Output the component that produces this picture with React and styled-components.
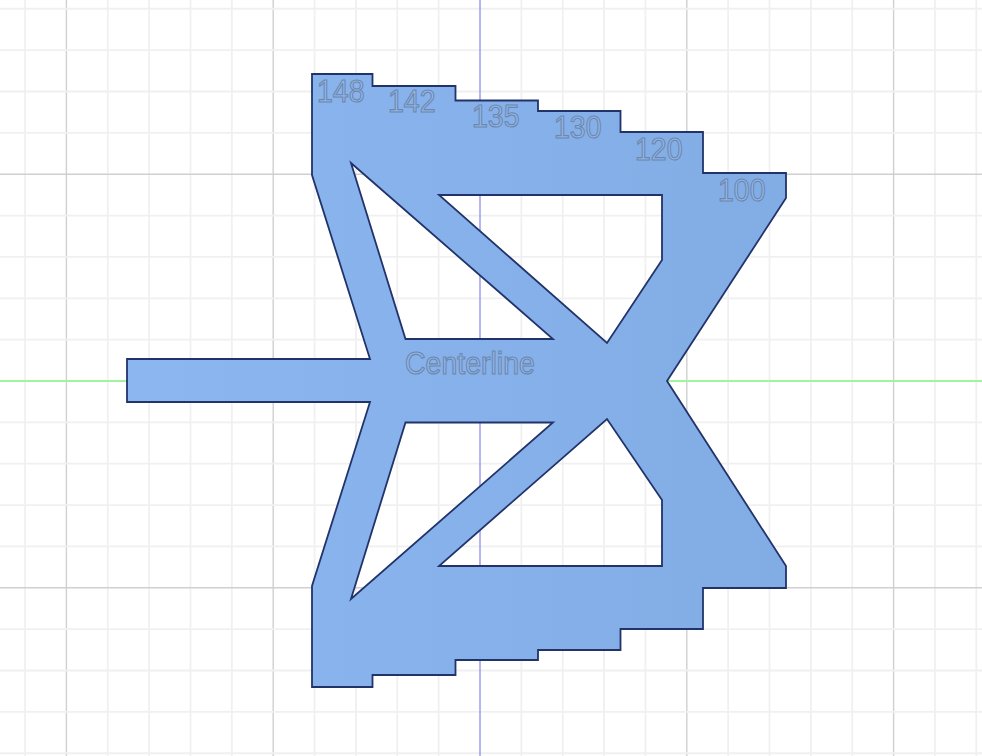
import React from "react";
import styled, { createGlobalStyle } from "styled-components";

const GlobalStyle = createGlobalStyle`
    html, body {
        margin: 0;
        padding: 0;
        background: #ffffff;
    }
`;

const WIDTH = 982;
const HEIGHT = 756;
const STEP = 41.36;

// one grid line each way through the origin of the sketch
const ORIGIN_X = 480;
const ORIGIN_Y = 381;

const gridValues = (origin, size) => {
    const values = [];
    const first = -Math.floor(origin / STEP);
    const last = Math.floor((size - origin) / STEP);
    for (let i = first; i <= last; i++) {
        if (i !== 0) values.push({ at: origin + i * STEP, major: i % 5 === 0 });
    }
    return values;
};

const OUTLINE = `
    M312 74 H372.5 V86 H455.5 V100.5 H538 V111 H620.5 V132 H703 V173 H786 V198
    L667 381 L786 566 V588 H703 V629 H620.5 V650 H538 V660 H455.5 V675 H372.5 V687 H312
    V586 L370 402 H127 V359 H370 L312 175 Z
    M351 163 L553 339 H405.5 Z
    M439 195 H662 V260 L607 343 Z
    M351 599 L405.5 422.5 H553 Z
    M439 566 H662 V500 L607 419 Z
`;

const LABELS = [
    { text: "148", x: 317, y: 102 },
    { text: "142", x: 388, y: 112 },
    { text: "135", x: 472, y: 127 },
    { text: "130", x: 554, y: 138 },
    { text: "120", x: 635, y: 160 },
    { text: "100", x: 718, y: 201 },
    { text: "Centerline", x: 405, y: 374 },
];

const Sheet = styled.div`
    width: ${WIDTH}px;
    height: ${HEIGHT}px;
    overflow: hidden;
    background: #ffffff;
`;

const Drawing = styled.svg`
    display: block;
    width: 100%;
    height: 100%;
`;

const GridLine = styled.line`
    stroke: ${(props) => (props.$major ? "#d0d0d2" : "#f0f0f1")};
    stroke-width: ${(props) => (props.$major ? 1.4 : 1.8)};
`;

const Axis = styled.line`
    stroke: ${(props) => props.$color};
    stroke-width: ${(props) => props.$weight};
`;

const Profile = styled.path`
    fill: url(#bodyFill);
    fill-rule: evenodd;
    stroke: #22336a;
    stroke-width: 1.8;
    stroke-linejoin: miter;
`;

const Engraving = styled.text`
    font-family: "Liberation Sans", Arial, sans-serif;
    font-size: 28.5px;
    fill: #90b6ea;
    stroke: #6c86ac;
    stroke-width: 1;
`;

function App() {
    return (
        <Sheet>
            <GlobalStyle />
            <Drawing viewBox={`0 0 ${WIDTH} ${HEIGHT}`}>
                <defs>
                    <linearGradient id="bodyFill" x1="0" y1="0" x2="1" y2="0">
                        <stop offset="0" stopColor="#8bb6f0" />
                        <stop offset="1" stopColor="#82ace4" />
                    </linearGradient>
                </defs>

                {gridValues(ORIGIN_X, WIDTH).map((line) => (
                    <GridLine key={line.at} $major={line.major} x1={line.at} x2={line.at} y1={0} y2={HEIGHT} />
                ))}
                {gridValues(ORIGIN_Y, HEIGHT).map((line) => (
                    <GridLine key={line.at} $major={line.major} x1={0} x2={WIDTH} y1={line.at} y2={line.at} />
                ))}

                <Axis $color="#9c9cf2" $weight={1.5} x1={ORIGIN_X} x2={ORIGIN_X} y1={0} y2={HEIGHT} />
                <Axis $color="#9ff59a" $weight={2} x1={0} x2={WIDTH} y1={ORIGIN_Y} y2={ORIGIN_Y} />

                <Profile d={OUTLINE} />

                {LABELS.map((label) => (
                    <Engraving
                        key={label.text}
                        transform={`translate(${label.x} ${label.y}) scale(1 1.1)`}
                    >
                        {label.text}
                    </Engraving>
                ))}
            </Drawing>
        </Sheet>
    );
}

export default App;
